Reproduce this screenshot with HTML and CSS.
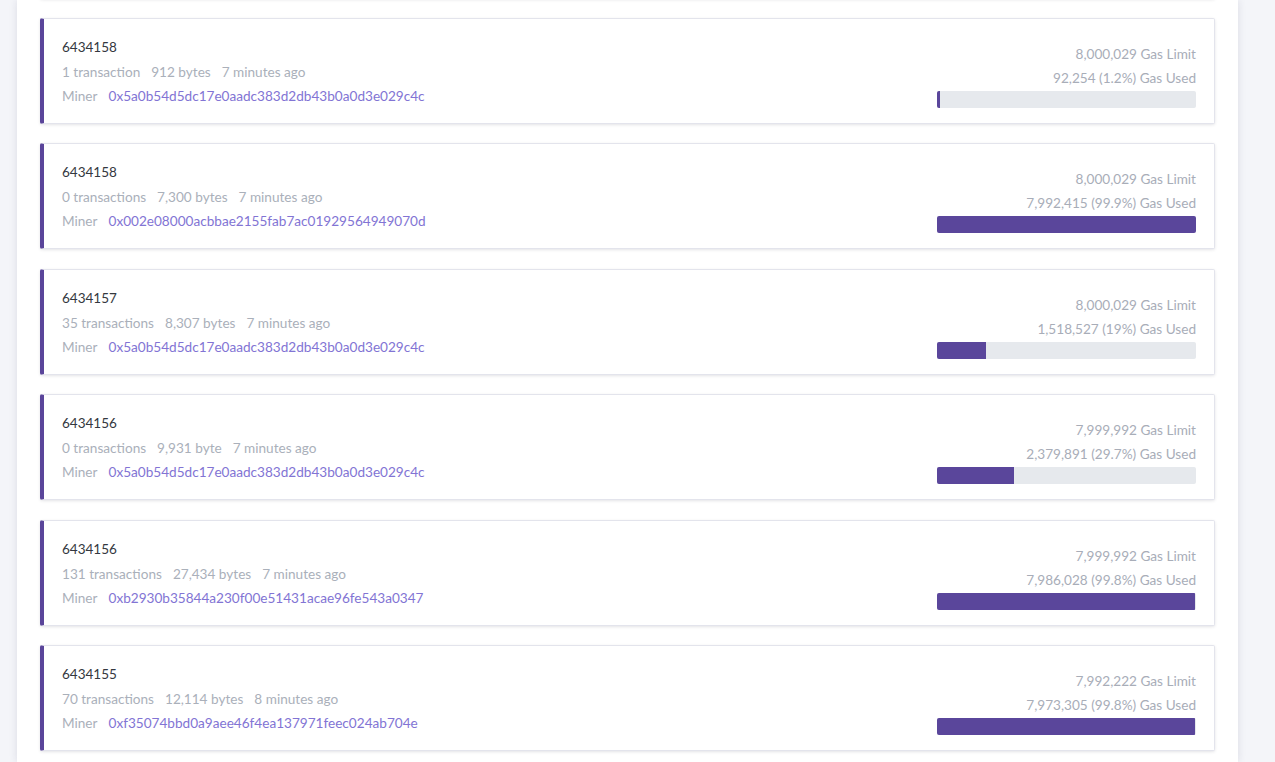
FILE: index.html
```html
<!DOCTYPE html>
<html>
<head>
<meta charset="utf-8">
<link rel="stylesheet" href="styles.css">
</head>
<body>
<div class="page">
  <div class="list">
    <div class="card stub"></div>
    <div class="card">
      <div class="left">
        <div class="num">6434158</div>
        <div class="meta"><span>1 transaction</span><span>912 bytes</span><span>7 minutes ago</span></div>
        <div class="meta"><span>Miner</span><a class="link">0x5a0b54d5dc17e0aadc383d2db43b0a0d3e029c4c</a></div>
      </div>
      <div class="right">
        <div class="gas">8,000,029 Gas Limit</div>
        <div class="gas">92,254 (1.2%) Gas Used</div>
        <div class="bar"><div class="fill" style="width:1.2%"></div></div>
      </div>
    </div>
    <div class="card">
      <div class="left">
        <div class="num">6434158</div>
        <div class="meta"><span>0 transactions</span><span>7,300 bytes</span><span>7 minutes ago</span></div>
        <div class="meta"><span>Miner</span><a class="link">0x002e08000acbbae2155fab7ac01929564949070d</a></div>
      </div>
      <div class="right">
        <div class="gas">8,000,029 Gas Limit</div>
        <div class="gas">7,992,415 (99.9%) Gas Used</div>
        <div class="bar"><div class="fill" style="width:100%"></div></div>
      </div>
    </div>
    <div class="card">
      <div class="left">
        <div class="num">6434157</div>
        <div class="meta"><span>35 transactions</span><span>8,307 bytes</span><span>7 minutes ago</span></div>
        <div class="meta"><span>Miner</span><a class="link">0x5a0b54d5dc17e0aadc383d2db43b0a0d3e029c4c</a></div>
      </div>
      <div class="right">
        <div class="gas">8,000,029 Gas Limit</div>
        <div class="gas">1,518,527 (19%) Gas Used</div>
        <div class="bar"><div class="fill" style="width:19%"></div></div>
      </div>
    </div>
    <div class="card">
      <div class="left">
        <div class="num">6434156</div>
        <div class="meta"><span>0 transactions</span><span>9,931 byte</span><span>7 minutes ago</span></div>
        <div class="meta"><span>Miner</span><a class="link">0x5a0b54d5dc17e0aadc383d2db43b0a0d3e029c4c</a></div>
      </div>
      <div class="right">
        <div class="gas">7,999,992 Gas Limit</div>
        <div class="gas">2,379,891 (29.7%) Gas Used</div>
        <div class="bar"><div class="fill" style="width:29.7%"></div></div>
      </div>
    </div>
    <div class="card">
      <div class="left">
        <div class="num">6434156</div>
        <div class="meta"><span>131 transactions</span><span>27,434 bytes</span><span>7 minutes ago</span></div>
        <div class="meta"><span>Miner</span><a class="link">0xb2930b35844a230f00e51431acae96fe543a0347</a></div>
      </div>
      <div class="right">
        <div class="gas">7,999,992 Gas Limit</div>
        <div class="gas">7,986,028 (99.8%) Gas Used</div>
        <div class="bar"><div class="fill" style="width:99.8%"></div></div>
      </div>
    </div>
    <div class="card">
      <div class="left">
        <div class="num">6434155</div>
        <div class="meta"><span>70 transactions</span><span>12,114 bytes</span><span>8 minutes ago</span></div>
        <div class="meta"><span>Miner</span><a class="link">0xf35074bbd0a9aee46f4ea137971feec024ab704e</a></div>
      </div>
      <div class="right">
        <div class="gas">7,992,222 Gas Limit</div>
        <div class="gas">7,973,305 (99.8%) Gas Used</div>
        <div class="bar"><div class="fill" style="width:99.8%"></div></div>
      </div>
    </div>
  </div>
</div>
</body>
</html>
```
FILE: styles.css
```css
html, body {
  margin: 0;
  padding: 0;
  background: #f4f5f9;
  font-family: Lato, "Noto Sans", sans-serif;
  overflow: hidden;
  height: 762px;
}
.page {
  margin-left: 17px;
  width: 1221px;
  height: 762px;
  background: #ffffff;
  box-shadow: 0 0 8px rgba(40, 40, 80, 0.12);
  padding: 0 23px 0 23px;
  box-sizing: border-box;
  overflow: hidden;
}
.list {
  margin-top: -107.4px;
  display: flex;
  flex-direction: column;
  gap: 19.4px;
}
.card {
  display: flex;
  justify-content: space-between;
  align-items: flex-end;
  height: 106px;
  flex: none;
  box-sizing: border-box;
  border: 1px solid #e3e4ec;
  border-left: 4px solid #5a459a;
  border-radius: 2px;
  background: #fff;
  box-shadow: 0 1px 3px rgba(30, 30, 60, 0.12);
  padding: 16px 18px 16px 18px;
}
.left {
  align-self: flex-start;
}
.num {
  font-size: 13.5px;
  line-height: 25px;
  color: #343840;
}
.meta {
  font-size: 13.6px;
  line-height: 24px;
  color: #aab0ba;
}
.meta span {
  margin-right: 11px;
}
.link {
  color: #8274d4;
  text-decoration: none;
}
.right {
  width: 259px;
  text-align: right;
  margin-bottom: -1px;
}
.gas {
  font-size: 13.6px;
  line-height: 24px;
  color: #a8adb8;
}
.bar {
  margin-top: 1px;
  height: 17px;
  background: #e6e9ed;
  border-radius: 2px;
  overflow: hidden;
  display: flex;
}
.fill {
  height: 100%;
  background: #5a469b;
  min-width: 3px;
}
```
